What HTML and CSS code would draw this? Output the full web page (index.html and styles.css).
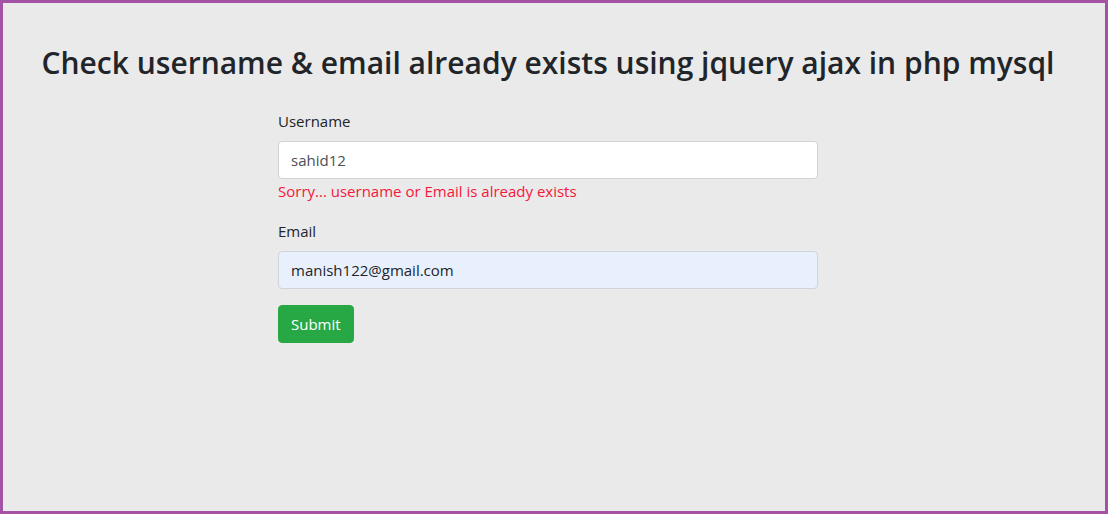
FILE: index.html
```html
<!DOCTYPE html>
<html lang="en">
<head>
<meta charset="utf-8">
<title>Check username &amp; email</title>
<link rel="stylesheet" href="styles.css">
</head>
<body>
<div class="frame">
  <h2 class="title">Check username &amp; email already exists using jquery ajax in php mysql</h2>
  <form class="form">
    <div class="group">
      <label class="label" for="username">Username</label>
      <input class="input" id="username" type="text" value="sahid12">
      <div class="error">Sorry... username or Email is already exists</div>
    </div>
    <div class="group">
      <label class="label" for="email">Email</label>
      <input class="input input-filled" id="email" type="text" value="manish122@gmail.com">
    </div>
    <button class="btn" type="button">Submit</button>
  </form>
</div>
</body>
</html>
```
FILE: styles.css
```css
* { box-sizing: border-box; }
html, body {
  margin: 0;
  padding: 0;
  background: #ffffff;
}
body {
  font-family: "Open Sans", "Noto Sans", Arial, sans-serif;
  color: #212529;
  font-size: 16px;
  line-height: 24px;
}
.frame {
  width: 1108px;
  height: 514px;
  border: 3px solid #a452a6;
  background: #eaeaea;
  padding: 0 12px 0 0;
}
.title {
  margin: 41px 0 27px 0;
  font-size: 30px;
  line-height: 38px;
  font-weight: 600;
  text-align: center;
  color: #212529;
  white-space: nowrap;
}
.form {
  width: 540px;
  margin-left: 275px;
}
.group {
  margin-bottom: 16px;
}
.label {
  display: block;
  margin-bottom: 8px;
  font-size: 15px;
}
.input {
  display: block;
  width: 100%;
  height: 38px;
  padding: 6px 12px;
  font-family: inherit;
  font-size: 15px;
  color: #495057;
  background: #ffffff;
  border: 1px solid #ced4da;
  border-radius: 4px;
  outline: none;
}
.input-filled {
  background: #e8f0fe;
  color: #212529;
}
.error {
  color: #f5173c;
  font-size: 15px;
  line-height: 24px;
}
.btn {
  display: inline-block;
  height: 38px;
  padding: 6px 12px;
  font-family: inherit;
  font-size: 15px;
  color: #ffffff;
  background: #28a745;
  border: 1px solid #28a745;
  border-radius: 4px;
}
```
